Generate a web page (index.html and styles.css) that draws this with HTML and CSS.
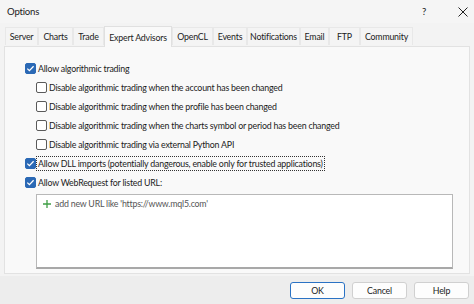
FILE: index.html
```html
<!DOCTYPE html>
<html lang="en">
<head>
    <meta charset="UTF-8">
    <title>Options</title>
    <link rel="stylesheet" href="styles.css">
</head>
<body>
    <div class="window">
        <div class="titlebar">
            <span class="title">Options</span>
            <span class="help-btn">?</span>
            <svg class="close-btn" width="10" height="10" viewBox="0 0 10 10">
                <path d="M0.5 0.5 L9.5 9.5 M9.5 0.5 L0.5 9.5" stroke="#222" stroke-width="1" fill="none"/>
            </svg>
        </div>

        <div class="tabs">
            <div class="tab">Server</div>
            <div class="tab">Charts</div>
            <div class="tab">Trade</div>
            <div class="tab active">Expert Advisors</div>
            <div class="tab">OpenCL</div>
            <div class="tab">Events</div>
            <div class="tab">Notifications</div>
            <div class="tab">Email</div>
            <div class="tab">FTP</div>
            <div class="tab">Community</div>
        </div>

        <div class="panel">
            <label class="row">
                <span class="box checked"></span>
                Allow algorithmic trading
            </label>
            <label class="row sub">
                <span class="box"></span>
                Disable algorithmic trading when the account has been changed
            </label>
            <label class="row sub">
                <span class="box"></span>
                Disable algorithmic trading when the profile has been changed
            </label>
            <label class="row sub">
                <span class="box"></span>
                Disable algorithmic trading when the charts symbol or period has been changed
            </label>
            <label class="row sub">
                <span class="box"></span>
                Disable algorithmic trading via external Python API
            </label>
            <label class="row">
                <span class="box checked"></span>
                <span class="focused">Allow DLL imports (potentially dangerous, enable only for trusted applications)</span>
            </label>
            <label class="row">
                <span class="box checked"></span>
                Allow WebRequest for listed URL:
            </label>

            <div class="url-list">
                <div class="url-add">
                    <svg class="plus" width="8" height="8" viewBox="0 0 8 8">
                        <path d="M4 0 V8 M0 4 H8" stroke="#3f9f45" stroke-width="1.3" fill="none"/>
                    </svg>
                    add new URL like 'https://www.mql5.com'
                </div>
            </div>
        </div>

        <div class="footer">
            <button class="btn default">OK</button>
            <button class="btn">Cancel</button>
            <button class="btn">Help</button>
        </div>
    </div>
</body>
</html>
```

FILE: styles.css
```css
* {
    margin: 0;
    padding: 0;
    box-sizing: border-box;
}

body {
    width: 474px;
    height: 304px;
    overflow: hidden;
    font-family: 'Lato', 'Open Sans', sans-serif;
    font-size: 8.8px;
    letter-spacing: -0.2px;
    color: #1b1b1b;
    background: #f3f3f3;
}

.window {
    height: 304px;
    display: flex;
    flex-direction: column;
}

/* title bar */
.titlebar {
    height: 23px;
    display: flex;
    align-items: center;
    padding-left: 7px;
    background: #f5f5f5;
}

.title {
    font-size: 9.6px;
    flex: 1;
}

.help-btn {
    font-size: 9.6px;
    margin-right: 32px;
}

.close-btn {
    margin-right: 6px;
}

/* tabs */
.tabs {
    height: 23px;
    display: flex;
    align-items: flex-end;
    padding-left: 5px;
}

.tab {
    height: 18px;
    display: flex;
    align-items: center;
    justify-content: center;
    background: #f4f4f4;
    border: 1px solid #e8e8e8;
    border-bottom: none;
    margin-bottom: 1px;
}

.tab:nth-child(1) { width: 33px; }
.tab:nth-child(2) { width: 35px; }
.tab:nth-child(3) { width: 31px; }
.tab:nth-child(4) { width: 68px; }
.tab:nth-child(5) { width: 41px; }
.tab:nth-child(6) { width: 34px; }
.tab:nth-child(7) { width: 53px; }
.tab:nth-child(8) { width: 29px; }
.tab:nth-child(9) { width: 31px; }
.tab:nth-child(10) { width: 53px; }

.tab.active {
    height: 21px;
    margin-bottom: -1px;
    background: #f9f9f9;
    border-color: #e0e0e0;
    position: relative;
    z-index: 1;
}

/* panel */
.panel {
    height: 228px;
    margin: 0 4px;
    border: 1px solid #e2e2e2;
    background: #f9f9f9;
    padding: 12px 16px 0 20px;
}

.row {
    height: 19px;
    display: flex;
    align-items: center;
    gap: 2px;
}

.row.sub {
    padding-left: 11px;
}

.box {
    width: 11px;
    height: 11px;
    border: 1px solid #5a5a5a;
    border-radius: 2px;
    background: #fff;
    flex-shrink: 0;
}

.box.checked {
    border-color: #2b69b5;
    background: #2b69b5 url("data:image/svg+xml,%3Csvg xmlns='http://www.w3.org/2000/svg' viewBox='0 0 11 11'%3E%3Cpath d='M2.3 5.6 L4.4 7.6 L8.6 3.2' stroke='white' stroke-width='1.3' fill='none'/%3E%3C/svg%3E") center / 11px 11px no-repeat;
}

.focused {
    outline: 1px dotted #333;
    outline-offset: 1px;
}

.url-list {
    margin: 2px 0 0 11px;
    height: 75px;
    background: #fff;
    border: 1px solid #b8b8b8;
    border-bottom: 2px solid #a8a8a8;
    padding: 3px 0 0 6px;
}

.url-add {
    display: flex;
    align-items: center;
    gap: 4px;
    color: #555;
}

/* footer */
.footer {
    flex: 1;
    margin-top: 2px;
    background: #ededed;
    display: flex;
    justify-content: flex-end;
    align-items: flex-start;
    gap: 7px;
    padding: 6px 5px 0 0;
}

.btn {
    width: 55px;
    height: 17px;
    font-family: inherit;
    font-size: 8.8px;
    letter-spacing: inherit;
    color: #1b1b1b;
    background: #fdfdfd;
    border: 1px solid #d0d0d0;
    border-radius: 3px;
}

.btn.default {
    border-color: #2a72c4;
}
```
